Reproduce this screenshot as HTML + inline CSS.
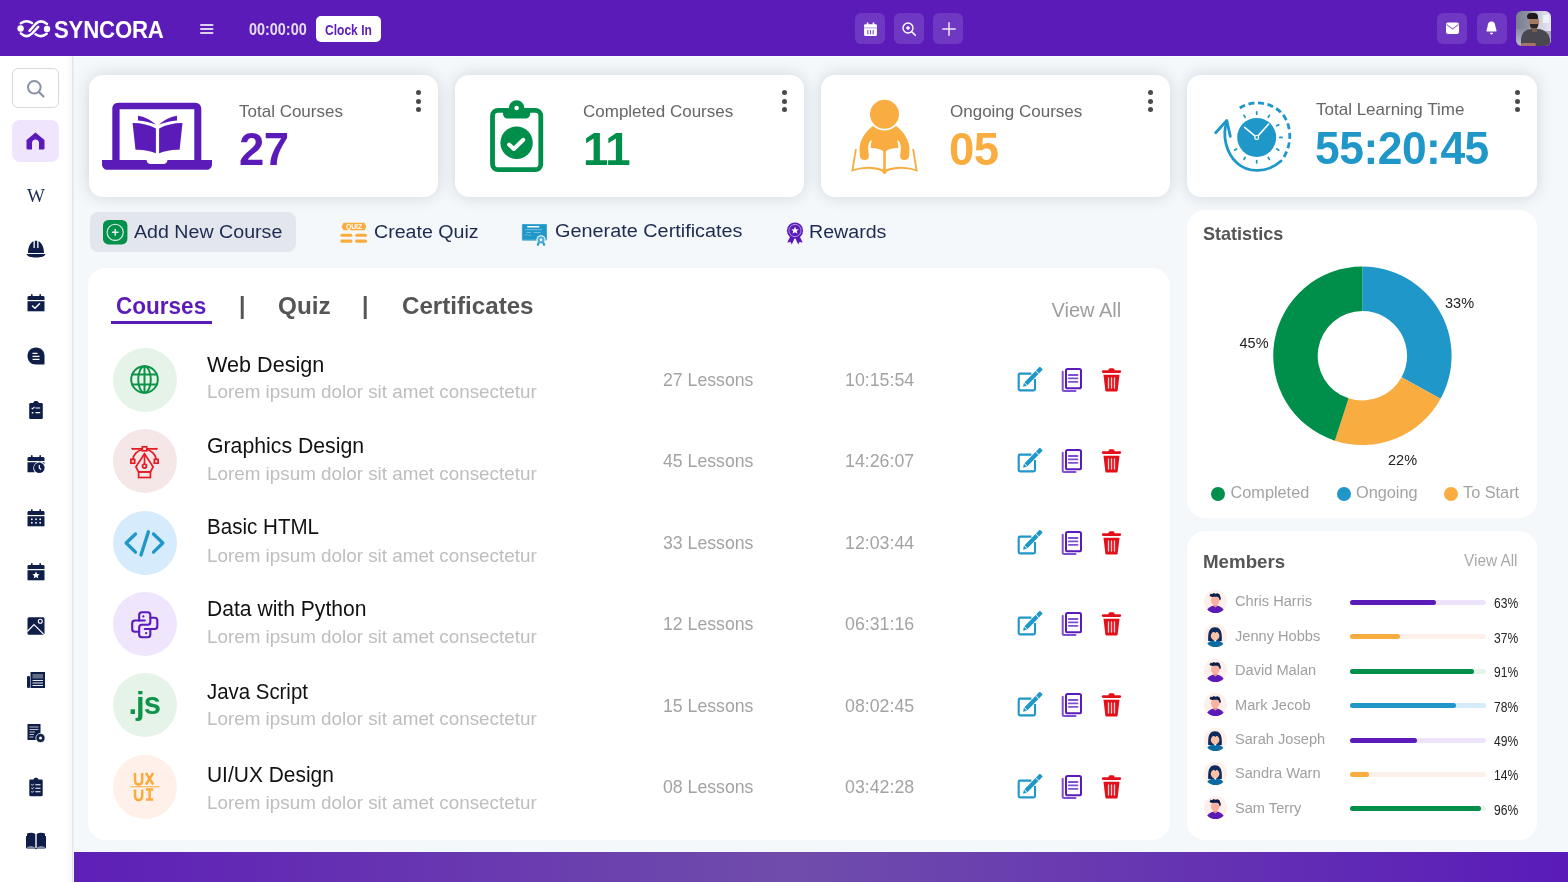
<!DOCTYPE html>
<html><head><meta charset="utf-8">
<style>
*{box-sizing:border-box;margin:0;padding:0}
html,body{width:1568px;height:882px;overflow:hidden}
body{font-family:"Liberation Sans",sans-serif;background:#f4f8fb;position:relative}
.a{position:absolute}
svg{position:absolute;overflow:visible}
#hdr{left:0;top:0;width:1568px;height:55.5px;background:#5a1bb9;border-bottom:1px solid #fbfcff;box-sizing:content-box}
#side{left:0;top:56px;width:73px;height:826px;background:linear-gradient(90deg,#fff 0,#fff 66px,#f6f8fa 71px);border-right:1px solid #dfe3ea;box-shadow:1px 0 2px rgba(0,0,0,.03)}
.card{position:absolute;background:#fff;border-radius:14px;box-shadow:0 0 15px rgba(30,40,60,.17)}
.panel{position:absolute;background:#fff;border-radius:18px}
#foot{left:74px;top:852px;width:1494px;height:30px;background:linear-gradient(90deg,#5e1fb7 0%,#704dab 48%,#5a1bb9 100%)}
.hbtn{position:absolute;top:13px;width:30px;height:31px;border-radius:6px;background:rgba(255,255,255,.13)}
.lbl{position:absolute;font-size:17px;color:#666;white-space:nowrap}
.num{position:absolute;font-size:46px;font-weight:bold;white-space:nowrap;letter-spacing:-.5px;transform:scaleX(.99);transform-origin:0 0}
.kb{position:absolute;width:5px;height:22px}
.kb i{position:absolute;left:0;width:5px;height:5px;border-radius:50%;background:#4a4a4a}
.act{position:absolute;font-size:17.6px;color:#1e2a4f;white-space:nowrap;transform:scaleX(1.115);transform-origin:0 0}
.tab{position:absolute;font-size:23px;font-weight:bold;color:#555;white-space:nowrap;top:292.5px}
.row-t{position:absolute;left:207px;font-size:21.5px;color:#111;white-space:nowrap;transform-origin:0 0}
.row-s{position:absolute;left:207px;font-size:19px;color:#bebebe;white-space:nowrap;transform:scaleX(.991);transform-origin:0 0}
.row-l{position:absolute;left:662.5px;font-size:19px;color:#a3a3a3;white-space:nowrap;transform:scaleX(.93);transform-origin:0 0}
.row-d{position:absolute;left:845px;font-size:19px;color:#a3a3a3;white-space:nowrap;transform:scaleX(.935);transform-origin:0 0}
.circ{position:absolute;left:113px;width:64px;height:64px;border-radius:50%}
.mname{position:absolute;left:1235px;font-size:15.3px;color:#a0a0a0;white-space:nowrap;transform:scaleX(.955);transform-origin:0 0}
.bar{position:absolute;left:1350px;width:136px;height:5px;border-radius:3px}
.bar i{position:absolute;left:0;top:0;height:5px;border-radius:3px}
.pct{position:absolute;left:1493.5px;font-size:14px;color:#222;white-space:nowrap;transform:scaleX(.86);transform-origin:0 0}
.av{position:absolute;left:1204px;width:23px;height:23px;border-radius:50%;background:#fdf0ea;overflow:hidden}
.sic{position:absolute;left:26px;width:20px;height:20px}
</style></head>
<body><div style="position:absolute;left:0;top:0;width:1568px;height:882px;will-change:transform">
<!-- HEADER -->
<div id="hdr" class="a"></div>
<svg style="left:17px;top:19px" width="34" height="19" viewBox="0 0 34 19">
  <g fill="none" stroke="#fff" stroke-width="2.5" stroke-linecap="round">
    <path d="M3.8 4.3 Q9.4 0.2 15 4"/>
    <path d="M12.5 11.8 L18.5 5 Q23.8 -0.2 30 5"/>
    <path d="M3.8 14.4 Q9.5 19.8 15.2 14.4 L21.2 7.9"/>
    <path d="M18.5 15.3 Q24.2 19.2 29.7 14.7"/>
  </g>
  <circle cx="3.6" cy="9.5" r="3.2" fill="#fff"/>
  <circle cx="30" cy="10" r="3.2" fill="#fff"/>
</svg>
<div class="a" style="left:54px;top:15.5px;font-size:24px;font-weight:bold;color:#fff;transform:scaleX(.925);transform-origin:0 0;letter-spacing:-.2px">SYNCORA</div>
<svg style="left:200px;top:24px" width="14" height="10"><rect x="0" y="0" width="13.5" height="2" rx="1" fill="#ddd0f2"/><rect x="0" y="4" width="13.5" height="2" rx="1" fill="#ddd0f2"/><rect x="0" y="8" width="13.5" height="2" rx="1" fill="#ddd0f2"/></svg>
<div class="a" style="left:248.5px;top:21px;font-size:16px;font-weight:bold;color:#e6dcf4;transform:scaleX(.9);transform-origin:0 0">00:00:00</div>
<div class="a" style="left:316px;top:16px;width:65px;height:26px;background:#fff;border-radius:5px"></div>
<div class="a" style="left:325px;top:22px;font-size:14px;font-weight:bold;color:#5a1bb9;transform:scaleX(.86);transform-origin:0 0">Clock In</div>

<div class="hbtn" style="left:855px"></div>
<div class="hbtn" style="left:894px"></div>
<div class="hbtn" style="left:933px"></div>
<svg style="left:862.7px;top:21.8px" width="15" height="15" viewBox="0 0 14 14">
  <rect x="1" y="2" width="12" height="11" rx="1" fill="#fff"/>
  <rect x="1" y="5" width="12" height="1" fill="#b9a0e0"/>
  <rect x="3.5" y="0.5" width="1.5" height="3" fill="#fff"/><rect x="9" y="0.5" width="1.5" height="3" fill="#fff"/>
  <rect x="4" y="7.5" width="1" height="4" fill="#7a45c9"/><rect x="6.5" y="7.5" width="1" height="4" fill="#7a45c9"/><rect x="9" y="7.5" width="1" height="4" fill="#7a45c9"/>
</svg>
<svg style="left:902px;top:21.6px" width="15" height="15" viewBox="0 0 15 15">
  <circle cx="6" cy="6" r="5" fill="none" stroke="#fff" stroke-width="1.4"/>
  <path d="M9.7 9.7 L13.3 13.3" stroke="#fff" stroke-width="1.6" stroke-linecap="round"/>
  <path d="M4 6 H8 M6 4 V8" stroke="#fff" stroke-width="1.3"/>
</svg>
<svg style="left:941.5px;top:22px" width="14" height="14" viewBox="0 0 14 14">
  <path d="M7 0.8 V13.2 M0.8 7 H13.2" stroke="#efe8f8" stroke-width="1.5" stroke-linecap="round"/>
</svg>

<div class="hbtn" style="left:1437px"></div>
<div class="hbtn" style="left:1477px"></div>
<svg style="left:1446px;top:22px" width="13" height="12" viewBox="0 0 13 12">
  <rect x="0" y="0.5" width="13" height="11.5" rx="2" fill="#fff"/>
  <path d="M0.5 2.5 L6.5 7 L12.5 2.5" fill="none" stroke="#9f7ad6" stroke-width="1.1"/>
</svg>
<svg style="left:1485px;top:21px" width="13" height="14" viewBox="0 0 13 14">
  <path d="M6.5 0.5 C3.5 0.5 2.8 3 2.6 5.5 L1.5 9.5 C1.3 10.2 1.7 10.6 2.3 10.6 H10.7 C11.3 10.6 11.7 10.2 11.5 9.5 L10.4 5.5 C10.2 3 9.5 0.5 6.5 0.5 Z" fill="#fff"/>
  <path d="M4.8 11.8 H8.2 C8 13 7.3 13.5 6.5 13.5 C5.7 13.5 5 13 4.8 11.8 Z" fill="#fff"/>
</svg>
<!-- avatar photo -->
<div class="a" style="left:1516px;top:11.3px;width:35px;height:35px;border-radius:6px;overflow:hidden;background:linear-gradient(90deg,#7b7e8e 0%,#8e91a0 35%,#c9cbd8 60%,#e4e6f1 100%)">
  <div class="a" style="left:0;top:18px;width:12px;height:17px;background:linear-gradient(180deg,#8a8da0,#b9bccb)"></div>
  <div class="a" style="left:25px;top:20px;width:10px;height:15px;background:#a3a6b4"></div>
  <div class="a" style="left:27px;top:4px;width:6px;height:8px;background:#f2f3fa;opacity:.9"></div>
  <div class="a" style="left:5px;top:18px;width:29px;height:20px;border-radius:10px 12px 0 0;background:#4b4751"></div>
  <div class="a" style="left:13px;top:6px;width:9.5px;height:11px;border-radius:40% 40% 45% 45%;background:#a47a62"></div>
  <div class="a" style="left:14px;top:12.5px;width:8px;height:5px;border-radius:0 0 4px 4px;background:#2e2626"></div>
  <div class="a" style="left:11px;top:1.8px;width:11px;height:6px;border-radius:6px 6px 1px 3px;background:#1c1a1e"></div>
  <div class="a" style="left:16px;top:17px;width:5px;height:4px;background:#7a5a4c"></div>
  <div class="a" style="left:5px;top:32px;width:15px;height:3px;border-radius:2px;background:#b57f6a;opacity:.85"></div>
</div>

<!-- SIDEBAR -->
<div id="side" class="a"></div>
<div class="a" style="left:12px;top:68px;width:47px;height:40px;border:1.3px solid #d6d8dc;border-radius:6px;background:#fff"></div>
<svg style="left:26px;top:79px" width="20" height="20" viewBox="0 0 20 20">
  <circle cx="8.3" cy="8.3" r="6.3" fill="none" stroke="#8891a6" stroke-width="2"/>
  <path d="M13 13 L17.5 17.5" stroke="#8891a6" stroke-width="2.2" stroke-linecap="round"/>
</svg>
<div class="a" style="left:12px;top:120px;width:47px;height:42px;border-radius:8px;background:#efe5fd"></div>
<svg style="left:26px;top:132px" width="19" height="18" viewBox="0 0 19 18">
  <path d="M9.5 0.5 L18.5 8 V16 C18.5 17 18 17.5 17 17.5 H13 V11 C13 9 11.5 7.6 9.5 7.6 C7.5 7.6 6 9 6 11 V17.5 H2 C1 17.5 0.5 17 0.5 16 V8 Z" fill="#5a1bb9"/>
</svg>
<div class="a" style="left:27px;top:184.5px;font-family:'Liberation Serif',serif;font-size:19px;color:#1b2a4e;letter-spacing:-2px">W</div>
<!-- helmet 249 -->
<svg class="sic" style="top:239px" viewBox="0 0 20 20">
  <path d="M2 14 C2 8 4.5 3.5 7.5 2.3 V9 H8.8 V1.7 H11.2 V9 H12.5 V2.3 C15.5 3.5 18 8 18 14 Z" fill="#0f1e48"/>
  <path d="M0.5 15 H19.5 C19 17.5 15 18.5 10 18.5 C5 18.5 1 17.5 0.5 15 Z" fill="#0f1e48"/>
</svg>
<!-- calendar check 302 -->
<svg class="sic" style="top:293px" viewBox="0 0 20 20">
  <path d="M1.5 4.5 C1.5 3.5 2.2 3 3 3 H17 C17.8 3 18.5 3.5 18.5 4.5 V7 H1.5 Z" fill="#0f1e48"/>
  <rect x="5" y="1" width="1.6" height="3.5" rx=".8" fill="#0f1e48"/><rect x="13.4" y="1" width="1.6" height="3.5" rx=".8" fill="#0f1e48"/>
  <path d="M1.5 8.2 H18.5 V18.3 H1.5 Z" fill="#0f1e48"/>
  <path d="M6.5 13 L9 15.3 L13.5 10.8" fill="none" stroke="#fff" stroke-width="1.5" stroke-linecap="round" stroke-linejoin="round"/>
</svg>
<!-- chat 356 -->
<svg class="sic" style="top:346px" viewBox="0 0 20 20">
  <path d="M10 1.5 C5 1.5 1.5 5 1.5 10 C1.5 15 5 18.5 10 18.5 H18.5 V10 C18.5 5 15 1.5 10 1.5 Z" fill="#0f1e48"/>
  <path d="M6.5 7.3 H11.5 M6.5 10.3 H13.5 M6.5 13.3 H13.5" stroke="#fff" stroke-width="1.3"/>
</svg>
<!-- clipboard check list 410 -->
<svg class="sic" style="top:400px" viewBox="0 0 20 20">
  <path d="M4.5 3 H7.2 C7.5 1.5 8.5 1 10 1 C11.5 1 12.5 1.5 12.8 3 H15.5 C16.2 3 16.8 3.6 16.8 4.3 V17.7 C16.8 18.4 16.2 19 15.5 19 H4.5 C3.8 19 3.2 18.4 3.2 17.7 V4.3 C3.2 3.6 3.8 3 4.5 3 Z" fill="#0f1e48"/>
  <path d="M5.6 7.8 L6.7 8.8 L8.5 6.8" fill="none" stroke="#fff" stroke-width="1.1"/>
  <path d="M9.5 8 H14.2 M9.5 12.7 H14.2" stroke="#fff" stroke-width="1.2"/>
  <rect x="5.8" y="12" width="1.5" height="1.5" fill="#fff"/>
</svg>
<!-- calendar clock 464 -->
<svg class="sic" style="top:454px" viewBox="0 0 20 20">
  <path d="M1.5 4.5 C1.5 3.5 2.2 3 3 3 H17 C17.8 3 18.5 3.5 18.5 4.5 V7 H1.5 Z" fill="#0f1e48"/>
  <rect x="5" y="1" width="1.6" height="3.5" rx=".8" fill="#0f1e48"/><rect x="13.4" y="1" width="1.6" height="3.5" rx=".8" fill="#0f1e48"/>
  <path d="M1.5 8.2 H18.5 V10 A6 6 0 0 0 8.8 18.3 H1.5 Z" fill="#0f1e48"/>
  <circle cx="13.3" cy="13.7" r="5.3" fill="#0f1e48"/>
  <path d="M13.3 11 V13.9 L15 15.5" fill="none" stroke="#fff" stroke-width="1.2"/>
</svg>
<!-- calendar grid 518 -->
<svg class="sic" style="top:508px" viewBox="0 0 20 20">
  <path d="M1.5 4.5 C1.5 3.5 2.2 3 3 3 H17 C17.8 3 18.5 3.5 18.5 4.5 V7 H1.5 Z" fill="#0f1e48"/>
  <rect x="5" y="1" width="1.6" height="3.5" rx=".8" fill="#0f1e48"/><rect x="13.4" y="1" width="1.6" height="3.5" rx=".8" fill="#0f1e48"/>
  <path d="M1.5 8.2 H18.5 V18.3 H1.5 Z" fill="#0f1e48"/>
  <g fill="#fff"><rect x="5" y="10.5" width="1.6" height="1.6"/><rect x="9.2" y="10.5" width="1.6" height="1.6"/><rect x="13.4" y="10.5" width="1.6" height="1.6"/><rect x="5" y="14" width="1.6" height="1.6"/><rect x="9.2" y="14" width="1.6" height="1.6"/><rect x="13.4" y="14" width="1.6" height="1.6"/></g>
</svg>
<!-- calendar star 572 -->
<svg class="sic" style="top:562px" viewBox="0 0 20 20">
  <path d="M1.5 4.5 C1.5 3.5 2.2 3 3 3 H17 C17.8 3 18.5 3.5 18.5 4.5 V7 H1.5 Z" fill="#0f1e48"/>
  <rect x="5" y="1" width="1.6" height="3.5" rx=".8" fill="#0f1e48"/><rect x="13.4" y="1" width="1.6" height="3.5" rx=".8" fill="#0f1e48"/>
  <path d="M1.5 8.2 H18.5 V18.3 H1.5 Z" fill="#0f1e48"/>
  <path d="M10 9.6 L11.1 12 L13.6 12.2 L11.7 13.9 L12.3 16.4 L10 15.1 L7.7 16.4 L8.3 13.9 L6.4 12.2 L8.9 12 Z" fill="#fff"/>
</svg>
<!-- image 626 -->
<svg class="sic" style="top:616px" viewBox="0 0 20 20">
  <rect x="1.5" y="1.3" width="17" height="17.4" rx="1.5" fill="#0f1e48"/>
  <path d="M1.3 15.5 L8 8.5 L17.8 18.3" fill="none" stroke="#fff" stroke-width="1.2"/>
  <circle cx="14.3" cy="5.3" r="2" fill="none" stroke="#fff" stroke-width="1.1"/>
</svg>
<!-- news 679 -->
<svg class="sic" style="top:670px" viewBox="0 0 20 20">
  <rect x="1" y="6" width="3" height="12" rx="1.2" fill="#0f1e48"/>
  <rect x="4.5" y="2" width="14.5" height="16" fill="#0f1e48"/>
  <path d="M6.5 10.5 H17 M6.5 13 H17 M6.5 15.5 H17" stroke="#fff" stroke-width="0.9"/>
  <rect x="6.5" y="4" width="10.5" height="4.5" fill="#fff" opacity=".35"/>
</svg>
<!-- doc gear 733 -->
<svg class="sic" style="top:723px" viewBox="0 0 20 20">
  <rect x="1.5" y="1" width="13" height="16" fill="#0f1e48"/>
  <path d="M3.5 4 H12.5 M3.5 6.5 H12.5 M3.5 9 H9 M3.5 11.5 H8 M3.5 14 H7.5" stroke="#fff" stroke-width="0.9" opacity=".8"/>
  <circle cx="14.5" cy="15" r="4.6" fill="#0f1e48" stroke="#fff" stroke-width=".8"/>
  <circle cx="14.5" cy="15" r="1.5" fill="#fff"/>
</svg>
<!-- clipboard list 787 -->
<svg class="sic" style="top:777px" viewBox="0 0 20 20">
  <path d="M4.5 2.5 H7.5 C7.8 1.3 8.7 0.8 10 0.8 C11.3 0.8 12.2 1.3 12.5 2.5 H15.5 C16.2 2.5 16.7 3 16.7 3.7 V18 C16.7 18.7 16.2 19.2 15.5 19.2 H4.5 C3.8 19.2 3.3 18.7 3.3 18 V3.7 C3.3 3 3.8 2.5 4.5 2.5 Z" fill="#0f1e48"/>
  <path d="M5.3 7.5 L6.3 8.4 L7.8 6.8 M5.3 11 L6.3 11.9 L7.8 10.3 M5.3 14.5 L6.3 15.4 L7.8 13.8" fill="none" stroke="#fff" stroke-width="0.9"/>
  <path d="M9.3 7.8 H14.5 M9.3 11.3 H14.5 M9.3 14.8 H14.5" stroke="#fff" stroke-width="1.1"/>
</svg>
<!-- book 840 -->
<svg class="sic" style="top:830px" viewBox="0 0 20 20">
  <path d="M1 3.5 C4 2.5 7 2.5 9.3 4 V17.5 C7 16.2 4 16.2 1 17 Z" fill="#0f1e48"/>
  <path d="M19 3.5 C16 2.5 13 2.5 10.7 4 V17.5 C13 16.2 16 16.2 19 17 Z" fill="#0f1e48"/>
  <path d="M0.5 6 V18 H9.5 V18.7 H10.5 V18 H19.5 V6" fill="none" stroke="#0f1e48" stroke-width="1"/>
</svg>

<!-- STAT CARDS -->
<div class="card" style="left:89px;top:75px;width:349px;height:122px"></div>
<div class="card" style="left:455px;top:75px;width:349px;height:122px"></div>
<div class="card" style="left:821px;top:75px;width:349px;height:122px"></div>
<div class="card" style="left:1187px;top:75px;width:350px;height:122px"></div>

<!-- card1 laptop -->
<svg style="left:101px;top:102px" width="112" height="69" viewBox="0 0 112 69">
  <path d="M11.3 58 V7 C11.3 3.5 13.5 0.7 17.3 0.7 H94.3 C98 0.7 100.3 3.5 100.3 7 V58 H93.3 V7.3 H18.6 V58 Z" fill="#5a1bb9"/>
  <path d="M1 58 H45.5 C46 60.5 47 62 50 62 H62 C65 62 66 60.5 66.5 58 H111 V62.5 C111 65.5 108.5 67.8 105.5 67.8 H6.5 C3.5 67.8 1 65.5 1 62.5 Z" fill="#5a1bb9"/>
  <path d="M31.6 21.1 C40 21 48 23 54.9 26.5 V51.3 C48.5 48.5 41 47.3 34.5 47.7 Z" fill="#5a1bb9"/>
  <path d="M81.5 21.1 C73 21 65 23 58.1 26.5 V51.3 C64.5 48.5 72 47.3 78.6 47.7 Z" fill="#5a1bb9"/>
  <path d="M37 13.7 C43 14.5 50 18 55 22.5 C50 20.7 43 19 37 18.5 Z" fill="#5a1bb9"/>
  <path d="M76 13.7 C70 14.5 63 18 58 22.5 C63 20.7 70 19 76 18.5 Z" fill="#5a1bb9"/>
</svg>
<div class="lbl" style="left:239px;top:102px">Total Courses</div>
<div class="num" style="left:239px;top:122px;color:#5a1bb9">27</div>
<div class="kb" style="left:416px;top:90px"><i style="top:0"></i><i style="top:8.5px"></i><i style="top:17px"></i></div>

<!-- card2 clipboard -->
<svg style="left:488px;top:98px" width="58" height="77" viewBox="0 0 58 77">
  <rect x="4.5" y="12.4" width="48.3" height="59.3" rx="5.5" fill="none" stroke="#008f4a" stroke-width="4.8"/>
  <circle cx="28.6" cy="10" r="7.7" fill="#008f4a"/>
  <path d="M15 10 H42.2 V15.5 C42.2 18.5 40.2 20.6 37.2 20.6 H20 C17 20.6 15 18.5 15 15.5 Z" fill="#008f4a"/>
  <circle cx="28.6" cy="10" r="2.3" fill="#fff"/>
  <circle cx="28.6" cy="44.7" r="16.2" fill="#008f4a"/>
  <path d="M21 46.5 L25.8 51 L35.3 41.8" fill="none" stroke="#fff" stroke-width="4" stroke-linecap="round" stroke-linejoin="round"/>
</svg>
<div class="lbl" style="left:583px;top:102px">Completed Courses</div>
<div class="num" style="left:583px;top:122px;color:#008f4a">11</div>
<div class="kb" style="left:782px;top:90px"><i style="top:0"></i><i style="top:8.5px"></i><i style="top:17px"></i></div>

<!-- card3 reader -->
<svg style="left:850px;top:99px" width="68" height="77" viewBox="0 0 68 77">
  <path d="M22.5 27.3 C15 33 9.5 42 9.5 50 L9.8 56.5 C10 59.5 12 61 14.8 61 C17.5 61 19 59.5 18.8 56.5 L18.2 50 C18 46 19 43 21 41.3 L21.8 41.5 C21 44 20.6 46.5 20.6 49 C26 48.8 31 50 34.5 53 C38 50 43 48.8 48.4 49 C48.4 46.5 48 44 47.2 41.5 L48 41.3 C50 43 51 46 50.8 50 L50.2 56.5 C50 59.5 51.5 61 54.2 61 C57 61 59 59.5 59.2 56.5 L59.5 50 C59.5 42 54 33 46.5 27.3 Z" fill="#f9ad40"/>
  <circle cx="34.5" cy="15.3" r="16.2" fill="#fff"/>
  <circle cx="34.5" cy="15.3" r="14.5" fill="#f9ad40"/>
  <rect x="33.2" y="52" width="2.6" height="19.5" fill="#f9ad40"/>
  <path d="M5 50 L1.2 72.8 C11 68.8 24 68.8 31.5 72.3 C32.5 73.3 33.5 74.8 34.5 75.2 C35.5 74.8 36.5 73.3 37.5 72.3 C45 68.8 58 68.8 67.8 72.8 L64 50 L62.2 50 L65.4 70.3 C56 66.8 44 66.8 36.5 70.3 L32.5 70.3 C25 66.8 13 66.8 3.6 70.3 L6.8 50 Z" fill="#f9ad40"/>
</svg>
<div class="lbl" style="left:950px;top:102px">Ongoing Courses</div>
<div class="num" style="left:949px;top:122px;color:#f9ad40">05</div>
<div class="kb" style="left:1148px;top:90px"><i style="top:0"></i><i style="top:8.5px"></i><i style="top:17px"></i></div>

<!-- card4 clock -->
<svg style="left:1212px;top:100px" width="82" height="74" viewBox="0 0 82 74">
  <circle cx="44.7" cy="37.4" r="19.5" fill="#1f97c8"/>
  <path d="M32.6 27.3 L44.7 37.4 L56.7 24" fill="none" stroke="#fff" stroke-width="1.6" stroke-linecap="round"/>
  <circle cx="44.7" cy="37.4" r="1.9" fill="#1f97c8" stroke="#fff" stroke-width="1.2"/>
  <g stroke="#1f97c8" stroke-width="1.8" stroke-linecap="round">
    <path d="M44.7 12 V14.2"/><path d="M57.4 15.4 L56.3 17.3"/><path d="M66.7 24.7 L64.8 25.8"/><path d="M70.1 37.4 H67.9"/>
    <path d="M66.7 50.1 L64.8 49"/><path d="M57.4 59.4 L56.3 57.5"/><path d="M44.7 62.8 V60.6"/><path d="M32 59.4 L33.1 57.5"/>
    <path d="M22.7 50.1 L24.6 49"/><path d="M32 15.4 L33.1 17.3"/>
  </g>
  <path d="M14.8 22 C10 35 14 53 25 63 C36 73 55 73.5 69 61" fill="none" stroke="#1f97c8" stroke-width="2.8" stroke-linecap="round"/>
  <path d="M27.8 8 C41 -1 62 2 72 16 C80 28 80 46 70 60" fill="none" stroke="#1f97c8" stroke-width="2.8" stroke-dasharray="6 3.6"/>
  <path d="M3.7 32.7 L14.8 20.5 L18.3 36.4" fill="none" stroke="#1f97c8" stroke-width="2.8" stroke-linecap="round" stroke-linejoin="round"/>
</svg>
<div class="lbl" style="left:1316px;top:100px">Total Learning Time</div>
<div class="num" style="left:1315px;top:120.5px;color:#1f97c8;transform:scaleX(.965)">55:20:45</div>
<div class="kb" style="left:1515px;top:90px"><i style="top:0"></i><i style="top:8.5px"></i><i style="top:17px"></i></div>

<!-- ACTIONS -->
<div class="a" style="left:90px;top:212px;width:206px;height:40px;border-radius:8px;background:#e4e6ee"></div>
<svg style="left:103px;top:220px" width="25" height="25" viewBox="0 0 25 25">
  <rect x="0" y="0" width="24.4" height="24.4" rx="5.5" fill="#00914a"/>
  <circle cx="12.2" cy="12.3" r="8.1" fill="none" stroke="#e8ecef" stroke-width="1.1"/>
  <path d="M12.2 8.9 V15.7 M8.9 12.3 H15.5" stroke="#e8ecef" stroke-width="1.5"/>
</svg>
<div class="act" style="left:134px;top:221.7px">Add New Course</div>

<svg style="left:340px;top:222px" width="28" height="22" viewBox="0 0 28 22">
  <path d="M3.5 0.7 H24.5 L26.3 4.5 L24.5 8.3 H3.5 L1.5 4.5 Z" fill="#f9ac3d"/>
  <text x="14" y="7.2" font-size="6.8" font-weight="bold" fill="#fff" text-anchor="middle" font-family="Liberation Sans">QUIZ</text>
  <rect x="0.4" y="11.7" width="12" height="3.1" rx="1.5" fill="#f9ac3d"/><rect x="15.2" y="11.7" width="11.8" height="3.1" rx="1.5" fill="#f9ac3d"/>
  <rect x="0.4" y="17.4" width="12" height="3.3" rx="1.5" fill="#f9ac3d"/><rect x="15.2" y="17.4" width="11.8" height="3.3" rx="1.5" fill="#f9ac3d"/>
</svg>
<div class="act" style="left:374px;top:221.8px">Create Quiz</div>

<svg style="left:521px;top:223px" width="27" height="24" viewBox="0 0 27 24">
  <rect x="0.9" y="0.9" width="25" height="16.5" rx="1" fill="#1f97c8"/>
  <rect x="1.5" y="1.5" width="23.8" height="15.3" fill="none" stroke="#4fb0d8" stroke-width=".7"/>
  <rect x="6" y="3" width="12.5" height="1.6" rx=".8" fill="#fff"/>
  <rect x="4" y="6.3" width="17" height=".9" fill="#7cc4e4"/>
  <rect x="5.5" y="9" width="4.5" height=".9" fill="#7cc4e4"/><rect x="12.7" y="9" width="7" height=".9" fill="#7cc4e4"/>
  <path d="M4 13 C5 11 6 11 7 12 C8 12.5 9 12 10.5 12.5" fill="none" stroke="#7cc4e4" stroke-width=".7"/>
  <circle cx="20" cy="16.8" r="4.6" fill="#fff"/>
  <circle cx="20" cy="16.8" r="3.6" fill="#4bafd9"/>
  <circle cx="20" cy="16.8" r="1.4" fill="#fff"/>
  <path d="M17.8 19.5 L16.5 22.7 M22.2 19.5 L23.5 22.7" stroke="#1f97c8" stroke-width="2"/>
</svg>
<div class="act" style="left:555px;top:220.5px;transform:scaleX(1.128)">Generate Certificates</div>

<svg style="left:786px;top:221.8px" width="18" height="23" viewBox="0 0 18 23">
  <path d="M4.5 14 L1.3 20.5 L4.5 20 L5.8 22.6 L9 15.5 Z M13.5 14 L16.7 20.5 L13.5 20 L12.2 22.6 L9 15.5 Z" fill="#5a1bb9"/>
  <circle cx="9" cy="8.5" r="8.1" fill="#5a1bb9"/>
  <circle cx="9" cy="8.5" r="6.1" fill="none" stroke="#c9b2ee" stroke-width=".8"/>
  <path d="M9 4.7 L10.1 7.3 L12.8 7.4 L10.7 9.1 L11.4 11.8 L9 10.3 L6.6 11.8 L7.3 9.1 L5.2 7.4 L7.9 7.3 Z" fill="#fff"/>
</svg>
<div class="act" style="left:809px;top:221.5px">Rewards</div>

<!-- COURSES PANEL -->
<div class="panel" style="left:88.3px;top:268px;width:1081.7px;height:572px"></div>
<div class="tab" style="left:116px;color:#5a1bb9;transform:scaleX(.98);transform-origin:0 0">Courses</div>
<div class="a" style="left:111px;top:321px;width:101px;height:3px;background:#5a1bb9"></div>
<div class="tab" style="left:239px">|</div>
<div class="tab" style="left:278px;transform:scaleX(1.056);transform-origin:0 0">Quiz</div>
<div class="tab" style="left:362px">|</div>
<div class="tab" style="left:401.8px;transform:scaleX(1.05);transform-origin:0 0">Certificates</div>
<div class="a" style="left:1051.5px;top:298.5px;font-size:20px;color:#9e9e9e">View All</div>

<div id="rows"></div><div class="circ" style="top:347.6px;background:#e6f3e8"></div>
<svg style="left:130px;top:365.1px" width="29" height="29" viewBox="0 0 29 29"><g fill="none" stroke="#0e9449" stroke-width="2"><circle cx="14.5" cy="14.5" r="13.3"/><ellipse cx="14.5" cy="14.5" rx="6.3" ry="13.3"/><path d="M14.5 1.2 V27.8 M1.5 9.5 H27.5 M1.5 19.5 H27.5"/></g></svg>
<div class="row-t" style="top:352.8px;transform:scaleX(1.005)">Web Design</div>
<div class="row-s" style="top:380.9px">Lorem ipsum dolor sit amet consectetur</div>
<div class="row-l" style="top:369.0px">27 Lessons</div>
<div class="row-d" style="top:369.0px">10:15:54</div>
<svg style="left:1016px;top:367.6px" width="27" height="25" viewBox="0 0 27 25"><path d="M15.4 5.6 H4 C3.2 5.6 2.7 6.1 2.7 6.9 V21.1 C2.7 21.9 3.2 22.4 4 22.4 H17.7 C18.5 22.4 19 21.9 19 21.1 V11.1" fill="none" stroke="#1f97c8" stroke-width="2.1"/><path d="M7 18.8 L7.95 14.83 L10.95 17.77 Z" fill="#1f97c8"/><path d="M8.5 14.26 L19.48 3.03 L22.48 5.97 L11.5 17.2 Z" fill="#1f97c8"/><path d="M20.04 2.46 L23.3 -0.9 C23.6 -1.2 24 -1.2 24.3 -0.9 L26.3 1.1 C26.6 1.4 26.6 1.8 26.3 2.04 L23.04 5.4 Z" fill="#1f97c8"/></svg>
<svg style="left:1061px;top:367.6px" width="22" height="25" viewBox="0 0 22 25"><path d="M1.7 3.8 V21.5 C1.7 22.5 2.3 23 3.2 23 H14.5" fill="none" stroke="#7e4fd0" stroke-width="2" stroke-linecap="round"/><rect x="5" y="1.1" width="15" height="19.2" rx="1.6" fill="none" stroke="#5a1bb9" stroke-width="2"/><path d="M7.8 7 H16.5 M7.8 10.4 H16.5 M7.8 13.8 H16.5" stroke="#7e4fd0" stroke-width="1.8" stroke-linecap="round"/></svg>
<svg style="left:1101px;top:367.6px" width="21" height="25" viewBox="0 0 21 25"><path d="M7.5 2.2 C7.5 1 8 0.3 9.3 0.3 H11.7 C13 0.3 13.5 1 13.5 2.2 H18.7 C19.6 2.2 20.2 2.8 20.2 3.6 C20.2 4.4 19.6 5 18.7 5 H2.3 C1.4 5 0.8 4.4 0.8 3.6 C0.8 2.8 1.4 2.2 2.3 2.2 Z" fill="#e3101a"/><path d="M2.5 6.8 H18.5 L16.7 22.2 C16.6 23 16 23.5 15.2 23.5 H5.8 C5 23.5 4.4 23 4.3 22.2 Z" fill="#e3101a"/><path d="M7.5 10 V20 M10.5 10 V20 M13.5 10 V20" stroke="#fbd0d2" stroke-width="1.3" stroke-linecap="round"/></svg>
<div class="circ" style="top:429.0px;background:#f5e6e8"></div>
<svg style="left:130px;top:445.5px" width="29" height="31" viewBox="0 0 29 31"><g fill="none" stroke="#e31b23" stroke-width="1.7"><path d="M2 2.8 H12.5 M16.5 2.8 H27"/><rect x="12.3" y="0.8" width="4.4" height="4" /><path d="M12.3 3.5 C7 4.5 3.5 9 2.8 13.5 M16.7 3.5 C22 4.5 25.5 9 26.2 13.5"/><rect x="0.9" y="13.4" width="3.8" height="3.8"/><rect x="24.3" y="13.4" width="3.8" height="3.8"/><path d="M14.5 7.8 C12 12 8 17 5.9 21 L8.6 25.9 H20.4 L23.1 21 C21 17 17 12 14.5 7.8 Z"/><path d="M14.5 7.8 V18"/><circle cx="14.5" cy="20.1" r="2"/><rect x="8.6" y="25.9" width="11.8" height="5.6"/></g><path d="M0.8 2.8 L3 1.5 V4.1 Z M28.2 2.8 L26 1.5 V4.1 Z" fill="#e31b23"/></svg>
<div class="row-t" style="top:434.3px;transform:scaleX(0.988)">Graphics Design</div>
<div class="row-s" style="top:462.9px">Lorem ipsum dolor sit amet consectetur</div>
<div class="row-l" style="top:450.4px">45 Lessons</div>
<div class="row-d" style="top:450.4px">14:26:07</div>
<svg style="left:1016px;top:449.0px" width="27" height="25" viewBox="0 0 27 25"><path d="M15.4 5.6 H4 C3.2 5.6 2.7 6.1 2.7 6.9 V21.1 C2.7 21.9 3.2 22.4 4 22.4 H17.7 C18.5 22.4 19 21.9 19 21.1 V11.1" fill="none" stroke="#1f97c8" stroke-width="2.1"/><path d="M7 18.8 L7.95 14.83 L10.95 17.77 Z" fill="#1f97c8"/><path d="M8.5 14.26 L19.48 3.03 L22.48 5.97 L11.5 17.2 Z" fill="#1f97c8"/><path d="M20.04 2.46 L23.3 -0.9 C23.6 -1.2 24 -1.2 24.3 -0.9 L26.3 1.1 C26.6 1.4 26.6 1.8 26.3 2.04 L23.04 5.4 Z" fill="#1f97c8"/></svg>
<svg style="left:1061px;top:449.0px" width="22" height="25" viewBox="0 0 22 25"><path d="M1.7 3.8 V21.5 C1.7 22.5 2.3 23 3.2 23 H14.5" fill="none" stroke="#7e4fd0" stroke-width="2" stroke-linecap="round"/><rect x="5" y="1.1" width="15" height="19.2" rx="1.6" fill="none" stroke="#5a1bb9" stroke-width="2"/><path d="M7.8 7 H16.5 M7.8 10.4 H16.5 M7.8 13.8 H16.5" stroke="#7e4fd0" stroke-width="1.8" stroke-linecap="round"/></svg>
<svg style="left:1101px;top:449.0px" width="21" height="25" viewBox="0 0 21 25"><path d="M7.5 2.2 C7.5 1 8 0.3 9.3 0.3 H11.7 C13 0.3 13.5 1 13.5 2.2 H18.7 C19.6 2.2 20.2 2.8 20.2 3.6 C20.2 4.4 19.6 5 18.7 5 H2.3 C1.4 5 0.8 4.4 0.8 3.6 C0.8 2.8 1.4 2.2 2.3 2.2 Z" fill="#e3101a"/><path d="M2.5 6.8 H18.5 L16.7 22.2 C16.6 23 16 23.5 15.2 23.5 H5.8 C5 23.5 4.4 23 4.3 22.2 Z" fill="#e3101a"/><path d="M7.5 10 V20 M10.5 10 V20 M13.5 10 V20" stroke="#fbd0d2" stroke-width="1.3" stroke-linecap="round"/></svg>
<div class="circ" style="top:510.5px;background:#d6ebfb"></div>
<svg style="left:124px;top:525.5px" width="42" height="34" viewBox="0 0 42 34"><g fill="none" stroke="#1f97c8" stroke-width="3.3" stroke-linecap="round" stroke-linejoin="round"><path d="M11.5 8 L2.2 17 L11.5 26.2"/><path d="M29.5 8 L38.8 17 L29.5 26.2"/><path d="M24.4 5.7 L17 29"/></g></svg>
<div class="row-t" style="top:515.2px;transform:scaleX(0.957)">Basic HTML</div>
<div class="row-s" style="top:544.5px">Lorem ipsum dolor sit amet consectetur</div>
<div class="row-l" style="top:531.9px">33 Lessons</div>
<div class="row-d" style="top:531.9px">12:03:44</div>
<svg style="left:1016px;top:530.5px" width="27" height="25" viewBox="0 0 27 25"><path d="M15.4 5.6 H4 C3.2 5.6 2.7 6.1 2.7 6.9 V21.1 C2.7 21.9 3.2 22.4 4 22.4 H17.7 C18.5 22.4 19 21.9 19 21.1 V11.1" fill="none" stroke="#1f97c8" stroke-width="2.1"/><path d="M7 18.8 L7.95 14.83 L10.95 17.77 Z" fill="#1f97c8"/><path d="M8.5 14.26 L19.48 3.03 L22.48 5.97 L11.5 17.2 Z" fill="#1f97c8"/><path d="M20.04 2.46 L23.3 -0.9 C23.6 -1.2 24 -1.2 24.3 -0.9 L26.3 1.1 C26.6 1.4 26.6 1.8 26.3 2.04 L23.04 5.4 Z" fill="#1f97c8"/></svg>
<svg style="left:1061px;top:530.5px" width="22" height="25" viewBox="0 0 22 25"><path d="M1.7 3.8 V21.5 C1.7 22.5 2.3 23 3.2 23 H14.5" fill="none" stroke="#7e4fd0" stroke-width="2" stroke-linecap="round"/><rect x="5" y="1.1" width="15" height="19.2" rx="1.6" fill="none" stroke="#5a1bb9" stroke-width="2"/><path d="M7.8 7 H16.5 M7.8 10.4 H16.5 M7.8 13.8 H16.5" stroke="#7e4fd0" stroke-width="1.8" stroke-linecap="round"/></svg>
<svg style="left:1101px;top:530.5px" width="21" height="25" viewBox="0 0 21 25"><path d="M7.5 2.2 C7.5 1 8 0.3 9.3 0.3 H11.7 C13 0.3 13.5 1 13.5 2.2 H18.7 C19.6 2.2 20.2 2.8 20.2 3.6 C20.2 4.4 19.6 5 18.7 5 H2.3 C1.4 5 0.8 4.4 0.8 3.6 C0.8 2.8 1.4 2.2 2.3 2.2 Z" fill="#e3101a"/><path d="M2.5 6.8 H18.5 L16.7 22.2 C16.6 23 16 23.5 15.2 23.5 H5.8 C5 23.5 4.4 23 4.3 22.2 Z" fill="#e3101a"/><path d="M7.5 10 V20 M10.5 10 V20 M13.5 10 V20" stroke="#fbd0d2" stroke-width="1.3" stroke-linecap="round"/></svg>
<div class="circ" style="top:591.9px;background:#efe5fd"></div>
<svg style="left:127.8px;top:607.7px" width="33.5" height="33.5" viewBox="0 0 24 24"><g fill="none" stroke="#5a1bb9" stroke-width="1.5" stroke-linecap="round" stroke-linejoin="round"><path d="M12 9h-7a2 2 0 0 0 -2 2v4a2 2 0 0 0 2 2h3"/><path d="M12 15h7a2 2 0 0 0 2 -2v-4a2 2 0 0 0 -2 -2h-3"/><path d="M8 9v-4a2 2 0 0 1 2 -2h4a2 2 0 0 1 2 2v5a2 2 0 0 1 -2 2h-4a2 2 0 0 0 -2 2v5a2 2 0 0 0 2 2h4a2 2 0 0 0 2 -2v-4"/><path d="M11 6l0 .01M13 18l0 .01" stroke-width="1.6"/></g></svg>
<div class="row-t" style="top:597.2px;transform:scaleX(0.981)">Data with Python</div>
<div class="row-s" style="top:626.0px">Lorem ipsum dolor sit amet consectetur</div>
<div class="row-l" style="top:613.3px">12 Lessons</div>
<div class="row-d" style="top:613.3px">06:31:16</div>
<svg style="left:1016px;top:611.9px" width="27" height="25" viewBox="0 0 27 25"><path d="M15.4 5.6 H4 C3.2 5.6 2.7 6.1 2.7 6.9 V21.1 C2.7 21.9 3.2 22.4 4 22.4 H17.7 C18.5 22.4 19 21.9 19 21.1 V11.1" fill="none" stroke="#1f97c8" stroke-width="2.1"/><path d="M7 18.8 L7.95 14.83 L10.95 17.77 Z" fill="#1f97c8"/><path d="M8.5 14.26 L19.48 3.03 L22.48 5.97 L11.5 17.2 Z" fill="#1f97c8"/><path d="M20.04 2.46 L23.3 -0.9 C23.6 -1.2 24 -1.2 24.3 -0.9 L26.3 1.1 C26.6 1.4 26.6 1.8 26.3 2.04 L23.04 5.4 Z" fill="#1f97c8"/></svg>
<svg style="left:1061px;top:611.9px" width="22" height="25" viewBox="0 0 22 25"><path d="M1.7 3.8 V21.5 C1.7 22.5 2.3 23 3.2 23 H14.5" fill="none" stroke="#7e4fd0" stroke-width="2" stroke-linecap="round"/><rect x="5" y="1.1" width="15" height="19.2" rx="1.6" fill="none" stroke="#5a1bb9" stroke-width="2"/><path d="M7.8 7 H16.5 M7.8 10.4 H16.5 M7.8 13.8 H16.5" stroke="#7e4fd0" stroke-width="1.8" stroke-linecap="round"/></svg>
<svg style="left:1101px;top:611.9px" width="21" height="25" viewBox="0 0 21 25"><path d="M7.5 2.2 C7.5 1 8 0.3 9.3 0.3 H11.7 C13 0.3 13.5 1 13.5 2.2 H18.7 C19.6 2.2 20.2 2.8 20.2 3.6 C20.2 4.4 19.6 5 18.7 5 H2.3 C1.4 5 0.8 4.4 0.8 3.6 C0.8 2.8 1.4 2.2 2.3 2.2 Z" fill="#e3101a"/><path d="M2.5 6.8 H18.5 L16.7 22.2 C16.6 23 16 23.5 15.2 23.5 H5.8 C5 23.5 4.4 23 4.3 22.2 Z" fill="#e3101a"/><path d="M7.5 10 V20 M10.5 10 V20 M13.5 10 V20" stroke="#fbd0d2" stroke-width="1.3" stroke-linecap="round"/></svg>
<div class="circ" style="top:673.4px;background:#e6f3e8"></div>
<div class="a" style="left:128.5px;top:685.9px;font-size:31px;font-weight:bold;color:#0e9449;letter-spacing:-1px">.js</div>
<div class="row-t" style="top:679.6px;transform:scaleX(0.949)">Java Script</div>
<div class="row-s" style="top:707.9px">Lorem ipsum dolor sit amet consectetur</div>
<div class="row-l" style="top:694.8px">15 Lessons</div>
<div class="row-d" style="top:694.8px">08:02:45</div>
<svg style="left:1016px;top:693.4px" width="27" height="25" viewBox="0 0 27 25"><path d="M15.4 5.6 H4 C3.2 5.6 2.7 6.1 2.7 6.9 V21.1 C2.7 21.9 3.2 22.4 4 22.4 H17.7 C18.5 22.4 19 21.9 19 21.1 V11.1" fill="none" stroke="#1f97c8" stroke-width="2.1"/><path d="M7 18.8 L7.95 14.83 L10.95 17.77 Z" fill="#1f97c8"/><path d="M8.5 14.26 L19.48 3.03 L22.48 5.97 L11.5 17.2 Z" fill="#1f97c8"/><path d="M20.04 2.46 L23.3 -0.9 C23.6 -1.2 24 -1.2 24.3 -0.9 L26.3 1.1 C26.6 1.4 26.6 1.8 26.3 2.04 L23.04 5.4 Z" fill="#1f97c8"/></svg>
<svg style="left:1061px;top:693.4px" width="22" height="25" viewBox="0 0 22 25"><path d="M1.7 3.8 V21.5 C1.7 22.5 2.3 23 3.2 23 H14.5" fill="none" stroke="#7e4fd0" stroke-width="2" stroke-linecap="round"/><rect x="5" y="1.1" width="15" height="19.2" rx="1.6" fill="none" stroke="#5a1bb9" stroke-width="2"/><path d="M7.8 7 H16.5 M7.8 10.4 H16.5 M7.8 13.8 H16.5" stroke="#7e4fd0" stroke-width="1.8" stroke-linecap="round"/></svg>
<svg style="left:1101px;top:693.4px" width="21" height="25" viewBox="0 0 21 25"><path d="M7.5 2.2 C7.5 1 8 0.3 9.3 0.3 H11.7 C13 0.3 13.5 1 13.5 2.2 H18.7 C19.6 2.2 20.2 2.8 20.2 3.6 C20.2 4.4 19.6 5 18.7 5 H2.3 C1.4 5 0.8 4.4 0.8 3.6 C0.8 2.8 1.4 2.2 2.3 2.2 Z" fill="#e3101a"/><path d="M2.5 6.8 H18.5 L16.7 22.2 C16.6 23 16 23.5 15.2 23.5 H5.8 C5 23.5 4.4 23 4.3 22.2 Z" fill="#e3101a"/><path d="M7.5 10 V20 M10.5 10 V20 M13.5 10 V20" stroke="#fbd0d2" stroke-width="1.3" stroke-linecap="round"/></svg>
<div class="circ" style="top:754.8px;background:#fff1ea"></div>
<svg style="left:130px;top:771.8px" width="30" height="30" viewBox="0 0 30 30"><g fill="none" stroke="#f9ac3d" stroke-width="2.5"><path d="M5 1 V8 C5 11 6.5 12.5 8.6 12.5 C10.7 12.5 12.2 11 12.2 8 V1"/><path d="M16 1 L23.2 12.5 M23.2 1 L16 12.5"/><path d="M5 17.5 V23.5 C5 26.5 6.5 28 8.6 28 C10.7 28 12.2 26.5 12.2 23.5 V17.5"/><path d="M16 17.5 H23.2 M19.6 17.5 V27.5 M16 27.5 H23.2"/></g><path d="M0.5 14.7 H29.5" stroke="#f9ac3d" stroke-width="1.3" opacity=".8"/></svg>
<div class="row-t" style="top:763.4px;transform:scaleX(0.974)">UI/UX Design</div>
<div class="row-s" style="top:791.7px">Lorem ipsum dolor sit amet consectetur</div>
<div class="row-l" style="top:776.2px">08 Lessons</div>
<div class="row-d" style="top:776.2px">03:42:28</div>
<svg style="left:1016px;top:774.8px" width="27" height="25" viewBox="0 0 27 25"><path d="M15.4 5.6 H4 C3.2 5.6 2.7 6.1 2.7 6.9 V21.1 C2.7 21.9 3.2 22.4 4 22.4 H17.7 C18.5 22.4 19 21.9 19 21.1 V11.1" fill="none" stroke="#1f97c8" stroke-width="2.1"/><path d="M7 18.8 L7.95 14.83 L10.95 17.77 Z" fill="#1f97c8"/><path d="M8.5 14.26 L19.48 3.03 L22.48 5.97 L11.5 17.2 Z" fill="#1f97c8"/><path d="M20.04 2.46 L23.3 -0.9 C23.6 -1.2 24 -1.2 24.3 -0.9 L26.3 1.1 C26.6 1.4 26.6 1.8 26.3 2.04 L23.04 5.4 Z" fill="#1f97c8"/></svg>
<svg style="left:1061px;top:774.8px" width="22" height="25" viewBox="0 0 22 25"><path d="M1.7 3.8 V21.5 C1.7 22.5 2.3 23 3.2 23 H14.5" fill="none" stroke="#7e4fd0" stroke-width="2" stroke-linecap="round"/><rect x="5" y="1.1" width="15" height="19.2" rx="1.6" fill="none" stroke="#5a1bb9" stroke-width="2"/><path d="M7.8 7 H16.5 M7.8 10.4 H16.5 M7.8 13.8 H16.5" stroke="#7e4fd0" stroke-width="1.8" stroke-linecap="round"/></svg>
<svg style="left:1101px;top:774.8px" width="21" height="25" viewBox="0 0 21 25"><path d="M7.5 2.2 C7.5 1 8 0.3 9.3 0.3 H11.7 C13 0.3 13.5 1 13.5 2.2 H18.7 C19.6 2.2 20.2 2.8 20.2 3.6 C20.2 4.4 19.6 5 18.7 5 H2.3 C1.4 5 0.8 4.4 0.8 3.6 C0.8 2.8 1.4 2.2 2.3 2.2 Z" fill="#e3101a"/><path d="M2.5 6.8 H18.5 L16.7 22.2 C16.6 23 16 23.5 15.2 23.5 H5.8 C5 23.5 4.4 23 4.3 22.2 Z" fill="#e3101a"/><path d="M7.5 10 V20 M10.5 10 V20 M13.5 10 V20" stroke="#fbd0d2" stroke-width="1.3" stroke-linecap="round"/></svg><!--rowsend-->

<!-- STATISTICS -->
<div class="panel" style="left:1187px;top:210px;width:350px;height:308px"></div>
<div class="a" style="left:1203px;top:222.5px;font-size:19px;font-weight:bold;color:#555;transform:scaleX(.95);transform-origin:0 0">Statistics</div>
<svg style="left:1272px;top:266.4px" width="182" height="180" viewBox="0 0 182 180">
  <g transform="translate(90.4 89.8)">
    <path id="seg-b" d="M0.00 -89.20 A89.2 89.2 0 0 1 78.17 42.97 L39.17 21.53 A44.7 44.7 0 0 0 0.00 -44.70 Z" fill="#1f97c8"/>
    <path id="seg-o" d="M78.17 42.97 A89.2 89.2 0 0 1 -27.56 84.83 L-13.81 42.51 A44.7 44.7 0 0 0 39.17 21.53 Z" fill="#f9ad40"/>
    <path id="seg-g" d="M-27.56 84.83 A89.2 89.2 0 0 1 -0.00 -89.20 L-0.00 -44.70 A44.7 44.7 0 0 0 -13.81 42.51 Z" fill="#008f4a"/>
  </g>
</svg>
<div class="a" style="left:1445px;top:295px;font-size:14.5px;color:#222">33%</div>
<div class="a" style="left:1239.5px;top:334.7px;font-size:14.5px;color:#222">45%</div>
<div class="a" style="left:1388px;top:452px;font-size:14.5px;color:#222">22%</div>
<div class="a" style="left:1211px;top:486.5px;width:14px;height:14px;border-radius:50%;background:#008f4a"></div>
<div class="a" style="left:1230.5px;top:483.2px;font-size:16.3px;color:#a3a3a3">Completed</div>
<div class="a" style="left:1337px;top:486.5px;width:14px;height:14px;border-radius:50%;background:#1f97c8"></div>
<div class="a" style="left:1356px;top:483.2px;font-size:16.3px;color:#a3a3a3">Ongoing</div>
<div class="a" style="left:1444px;top:486.5px;width:14px;height:14px;border-radius:50%;background:#f9ad40"></div>
<div class="a" style="left:1463px;top:483.2px;font-size:16.3px;color:#a3a3a3">To Start</div>

<!-- MEMBERS -->
<div class="panel" style="left:1187px;top:531px;width:350px;height:309px"></div>
<div class="a" style="left:1203px;top:551px;font-size:19px;font-weight:bold;color:#555;transform:scaleX(.985);transform-origin:0 0">Members</div>
<div class="a" style="left:1463.5px;top:552px;font-size:16px;color:#a9a9a9;transform:scaleX(.96);transform-origin:0 0">View All</div>
<div id="mems"></div><div class="av" style="top:590.0px"><svg style="left:0;top:0" width="23" height="23" viewBox="0 0 23 23"><ellipse cx="11.4" cy="23.2" rx="9.3" ry="7.6" fill="#5a1bb9"/><path d="M9.6 13 V16.2 L11.3 17.6 L13.2 16.2 V13 Z" fill="#f48c84"/><ellipse cx="11.2" cy="10.6" rx="4.3" ry="4.6" fill="#fbb0a2"/><path d="M5.6 5.2 L6.8 3.6 L8 4.3 L9.6 3 L11.5 3.8 L13.5 3.2 L15.5 4.2 L16.3 6.5 L16.9 8.3 L16.3 10.2 L15.4 9.8 C15.2 8 14.5 7 13 6.8 C11 6.6 8.5 7.2 7.2 6.8 C6.2 6.5 5.7 6 5.6 5.2 Z" fill="#0f1e48"/></svg></div>
<div class="mname" style="top:592.3px">Chris Harris</div>
<div class="bar" style="top:600.0px;background:#ede4fb"><i style="width:85.7px;background:#5a1bb9"></i></div>
<div class="pct" style="top:595.4px">63%</div>
<div class="av" style="top:624.4px"><svg style="left:0;top:0" width="23" height="23" viewBox="0 0 23 23"><path d="M4.2 17 C3.8 9 5 3.3 11 3.3 C17 3.3 18.2 9 17.8 17 Z" fill="#0f2a5c"/><ellipse cx="11.2" cy="23.6" rx="9.3" ry="7.4" fill="#0b6aa2"/><path d="M9.5 15.5 H12.9 L11.2 18 Z" fill="#fff"/><ellipse cx="11.1" cy="11.8" rx="4.3" ry="4.4" fill="#fbc2a6"/><path d="M6.3 11 C7.5 7.5 9.5 6.8 11.3 9 C13 7 15 7.5 16 10.8 C16 6.5 14.3 4.8 11.1 4.8 C8 4.8 6.3 6.5 6.3 11 Z" fill="#0f2a5c"/></svg></div>
<div class="mname" style="top:626.7px">Jenny Hobbs</div>
<div class="bar" style="top:634.4px;background:#fdf0ea"><i style="width:50.3px;background:#f9ad40"></i></div>
<div class="pct" style="top:629.8px">37%</div>
<div class="av" style="top:658.8px"><svg style="left:0;top:0" width="23" height="23" viewBox="0 0 23 23"><ellipse cx="11.4" cy="23.2" rx="9.3" ry="7.6" fill="#5a1bb9"/><path d="M9.6 13 V16.2 L11.3 17.6 L13.2 16.2 V13 Z" fill="#f48c84"/><ellipse cx="11.2" cy="10.6" rx="4.3" ry="4.6" fill="#fbb0a2"/><path d="M5.6 5.2 L6.8 3.6 L8 4.3 L9.6 3 L11.5 3.8 L13.5 3.2 L15.5 4.2 L16.3 6.5 L16.9 8.3 L16.3 10.2 L15.4 9.8 C15.2 8 14.5 7 13 6.8 C11 6.6 8.5 7.2 7.2 6.8 C6.2 6.5 5.7 6 5.6 5.2 Z" fill="#0f1e48"/></svg></div>
<div class="mname" style="top:661.1px">David Malan</div>
<div class="bar" style="top:668.8px;background:#e5f3e8"><i style="width:123.8px;background:#008f4a"></i></div>
<div class="pct" style="top:664.2px">91%</div>
<div class="av" style="top:693.2px"><svg style="left:0;top:0" width="23" height="23" viewBox="0 0 23 23"><ellipse cx="11.4" cy="23.2" rx="9.3" ry="7.6" fill="#5a1bb9"/><path d="M9.6 13 V16.2 L11.3 17.6 L13.2 16.2 V13 Z" fill="#f48c84"/><ellipse cx="11.2" cy="10.6" rx="4.3" ry="4.6" fill="#fbb0a2"/><path d="M5.6 5.2 L6.8 3.6 L8 4.3 L9.6 3 L11.5 3.8 L13.5 3.2 L15.5 4.2 L16.3 6.5 L16.9 8.3 L16.3 10.2 L15.4 9.8 C15.2 8 14.5 7 13 6.8 C11 6.6 8.5 7.2 7.2 6.8 C6.2 6.5 5.7 6 5.6 5.2 Z" fill="#0f1e48"/></svg></div>
<div class="mname" style="top:695.5px">Mark Jecob</div>
<div class="bar" style="top:703.2px;background:#d6ecfa"><i style="width:106.1px;background:#1f97c8"></i></div>
<div class="pct" style="top:698.6px">78%</div>
<div class="av" style="top:727.6px"><svg style="left:0;top:0" width="23" height="23" viewBox="0 0 23 23"><path d="M4.2 17 C3.8 9 5 3.3 11 3.3 C17 3.3 18.2 9 17.8 17 Z" fill="#0f2a5c"/><ellipse cx="11.2" cy="23.6" rx="9.3" ry="7.4" fill="#0b6aa2"/><path d="M9.5 15.5 H12.9 L11.2 18 Z" fill="#fff"/><ellipse cx="11.1" cy="11.8" rx="4.3" ry="4.4" fill="#fbc2a6"/><path d="M6.3 11 C7.5 7.5 9.5 6.8 11.3 9 C13 7 15 7.5 16 10.8 C16 6.5 14.3 4.8 11.1 4.8 C8 4.8 6.3 6.5 6.3 11 Z" fill="#0f2a5c"/></svg></div>
<div class="mname" style="top:729.9px">Sarah Joseph</div>
<div class="bar" style="top:737.6px;background:#ede4fb"><i style="width:66.6px;background:#5a1bb9"></i></div>
<div class="pct" style="top:733.0px">49%</div>
<div class="av" style="top:762.0px"><svg style="left:0;top:0" width="23" height="23" viewBox="0 0 23 23"><path d="M4.2 17 C3.8 9 5 3.3 11 3.3 C17 3.3 18.2 9 17.8 17 Z" fill="#0f2a5c"/><ellipse cx="11.2" cy="23.6" rx="9.3" ry="7.4" fill="#0b6aa2"/><path d="M9.5 15.5 H12.9 L11.2 18 Z" fill="#fff"/><ellipse cx="11.1" cy="11.8" rx="4.3" ry="4.4" fill="#fbc2a6"/><path d="M6.3 11 C7.5 7.5 9.5 6.8 11.3 9 C13 7 15 7.5 16 10.8 C16 6.5 14.3 4.8 11.1 4.8 C8 4.8 6.3 6.5 6.3 11 Z" fill="#0f2a5c"/></svg></div>
<div class="mname" style="top:764.3px">Sandra Warn</div>
<div class="bar" style="top:772.0px;background:#fdf0ea"><i style="width:19.0px;background:#f9ad40"></i></div>
<div class="pct" style="top:767.4px">14%</div>
<div class="av" style="top:796.4px"><svg style="left:0;top:0" width="23" height="23" viewBox="0 0 23 23"><ellipse cx="11.4" cy="23.2" rx="9.3" ry="7.6" fill="#5a1bb9"/><path d="M9.6 13 V16.2 L11.3 17.6 L13.2 16.2 V13 Z" fill="#f48c84"/><ellipse cx="11.2" cy="10.6" rx="4.3" ry="4.6" fill="#fbb0a2"/><path d="M5.6 5.2 L6.8 3.6 L8 4.3 L9.6 3 L11.5 3.8 L13.5 3.2 L15.5 4.2 L16.3 6.5 L16.9 8.3 L16.3 10.2 L15.4 9.8 C15.2 8 14.5 7 13 6.8 C11 6.6 8.5 7.2 7.2 6.8 C6.2 6.5 5.7 6 5.6 5.2 Z" fill="#0f1e48"/></svg></div>
<div class="mname" style="top:798.7px">Sam Terry</div>
<div class="bar" style="top:806.4px;background:#e5f3e8"><i style="width:130.6px;background:#008f4a"></i></div>
<div class="pct" style="top:801.8px">96%</div><!--memsend-->

<div id="foot" class="a"></div>
</div></body></html>
